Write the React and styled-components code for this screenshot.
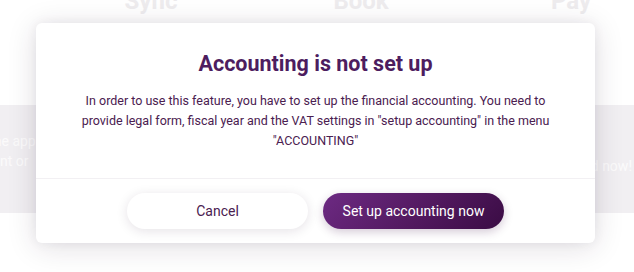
import React from "react";
import styled, { createGlobalStyle } from "styled-components";

const Global = createGlobalStyle`
  html, body { margin: 0; padding: 0; background: #ffffff; }
  body { font-family: Roboto, "Noto Sans", Arial, sans-serif; overflow: hidden; }
  #root { width: 634px; height: 272px; position: relative; overflow: hidden; }
`;

const Page = styled.div`
  width: 634px;
  height: 272px;
  display: flex;
  flex-direction: column;
  background: #ffffff;
`;

const Steps = styled.div`
  display: grid;
  grid-template-columns: repeat(3, 210px);
  padding-left: 46px;
  margin-top: -13px;
  height: 74px;
`;

const Step = styled.div`
  display: flex;
  flex-direction: column;
  align-items: center;
  gap: 18px;
`;

const StepTitle = styled.div`
  font-size: 24px;
  font-weight: 700;
  color: #ebe9ec;
  line-height: 28px;
`;

const StepSub = styled.div`
  font-size: 11px;
  color: #e9e8ea;
  align-self: flex-end;
  margin-right: -18px;
`;

const Band = styled.div`
  margin-top: 44px;
  height: 108px;
  background: #efedf0;
  display: flex;
  justify-content: space-between;
  align-items: center;
`;

const BandText = styled.div`
  color: #fbfafb;
  font-size: 14px;
  line-height: 20px;
  width: 120px;
  margin-left: -38px;
  margin-top: -16px;
`;

const BandButton = styled.div`
  color: #fbfafb;
  font-size: 14px;
  margin-right: 2px;
  margin-top: 14px;
`;

const Overlay = styled.div`
  position: absolute;
  inset: 0;
  display: flex;
  justify-content: center;
  padding-top: 23px;
  box-sizing: border-box;
  background: rgba(255, 255, 255, 0.15);
`;

const Modal = styled.div`
  width: 559px;
  height: 220px;
  margin-left: -3px;
  background: #ffffff;
  border-radius: 6px;
  box-shadow: 0 4px 30px rgba(40, 20, 50, 0.14), 0 0 12px rgba(40, 20, 50, 0.06);
  display: flex;
  flex-direction: column;
  box-sizing: border-box;
`;

const Body = styled.div`
  padding: 27px 36px 0;
  height: 156px;
  box-sizing: border-box;
  border-bottom: 1px solid #f2f0f3;
  text-align: center;
`;

const Title = styled.h2`
  margin: 0;
  font-size: 21.5px;
  line-height: 28px;
  font-weight: 700;
  color: #4d1d5f;
`;

const Text = styled.p`
  margin: 13px 0 0;
  font-size: 12.5px;
  line-height: 20px;
  color: #4a2050;
`;

const Footer = styled.div`
  display: flex;
  justify-content: center;
  gap: 15px;
  padding-top: 14px;
`;

const Button = styled.button`
  width: 181px;
  height: 36px;
  border-radius: 18px;
  border: none;
  font-family: Roboto, "Noto Sans", Arial, sans-serif;
  font-size: 14px;
  cursor: pointer;
  color: ${(p) => (p.$primary ? "#ffffff" : "#4a2050")};
  background: ${(p) =>
    p.$primary
      ? "linear-gradient(135deg, #6d2a83 0%, #52195f 55%, #3a0c44 100%)"
      : "#ffffff"};
  box-shadow: ${(p) =>
    p.$primary
      ? "0 3px 10px rgba(60, 15, 70, 0.22)"
      : "0 2px 12px rgba(40, 20, 50, 0.12)"};
`;

export default function App() {
  return (
    <>
      <Global />
      <Page>
        <Steps>
          <Step>
            <StepTitle>Sync</StepTitle>
          </Step>
          <Step>
            <StepTitle>Book</StepTitle>
          </Step>
          <Step>
            <StepTitle>Pay</StepTitle>
            <StepSub>bills</StepSub>
          </Step>
        </Steps>
        <Band>
          <BandText>
            Use the app to
            <br />
            account or
          </BandText>
          <BandButton>Get started now!</BandButton>
        </Band>
      </Page>
      <Overlay>
        <Modal role="dialog">
          <Body>
            <Title>Accounting is not set up</Title>
            <Text>
              In order to use this feature, you have to set up the financial accounting. You need to
              provide legal form, fiscal year and the VAT settings in "setup accounting" in the menu
              "ACCOUNTING"
            </Text>
          </Body>
          <Footer>
            <Button>Cancel</Button>
            <Button $primary>Set up accounting now</Button>
          </Footer>
        </Modal>
      </Overlay>
    </>
  );
}
